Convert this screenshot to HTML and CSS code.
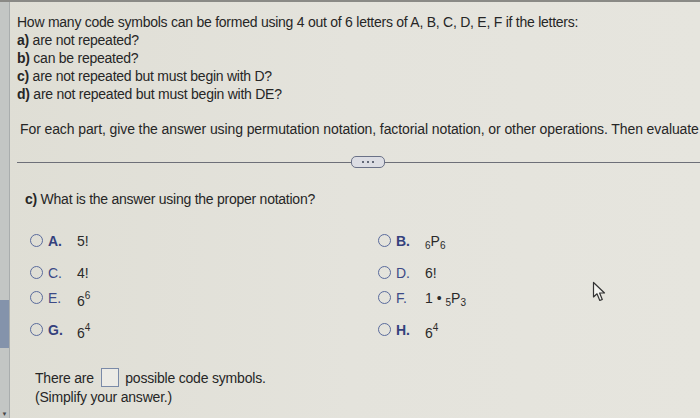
FILE: index.html
```html
<!DOCTYPE html>
<html>
<head>
<meta charset="utf-8">
<link rel="stylesheet" href="styles.css">
</head>
<body>
<div class="screen">
  <div class="scrollbar">
    <div class="track-top"></div>
    <div class="thumb"></div>
    <div class="track-bottom"><span class="arrow">&#9660;</span></div>
  </div>
  <div class="main">
    <div class="question">
      <p class="line">How many code symbols can be formed using 4 out of 6 letters of A, B, C, D, E, F if the letters:</p>
      <p class="line"><b>a)</b> are not repeated?</p>
      <p class="line"><b>b)</b> can be repeated?</p>
      <p class="line"><b>c)</b> are not repeated but must begin with D?</p>
      <p class="line"><b>d)</b> are not repeated but must begin with DE?</p>
      <p class="line instr">For each part, give the answer using permutation notation, factorial notation, or other operations. Then evaluate</p>
    </div>
    <div class="divider">
      <div class="rule"></div>
      <div class="more"><span></span><span></span><span></span></div>
      <div class="rule rule-right"></div>
    </div>
    <div class="part">
      <p class="prompt"><b>c)</b> What is the answer using the proper notation?</p>
      <div class="options">
        <div class="col">
          <div class="opt"><span class="radio"></span><span class="lbl bold">A.</span><span class="val">5!</span></div>
          <div class="opt r2"><span class="radio"></span><span class="lbl">C.</span><span class="val">4!</span></div>
          <div class="opt r3"><span class="radio"></span><span class="lbl">E.</span><span class="val low">6<sup>6</sup></span></div>
          <div class="opt r4"><span class="radio"></span><span class="lbl bold">G.</span><span class="val low">6<sup>4</sup></span></div>
        </div>
        <div class="col col-right">
          <div class="opt"><span class="radio"></span><span class="lbl bold">B.</span><span class="val"><sub>6</sub>P<sub>6</sub></span></div>
          <div class="opt r2"><span class="radio"></span><span class="lbl">D.</span><span class="val">6!</span></div>
          <div class="opt r3"><span class="radio"></span><span class="lbl">F.</span><span class="val">1 &#8226; <sub>5</sub>P<sub>3</sub></span></div>
          <div class="opt r4"><span class="radio"></span><span class="lbl bold">H.</span><span class="val low">6<sup>4</sup></span></div>
        </div>
        <svg class="cursor" width="16" height="22" viewBox="0 0 16 22">
          <path d="M1.5 1.5 L1.5 16 L5 12.8 L7.8 19.5 L10.3 18.4 L7.6 12 L12.5 12 Z" fill="#f4f4f0" stroke="#333" stroke-width="1.2" stroke-linejoin="round"/>
        </svg>
      </div>
      <p class="answer">There are <span class="box"></span> possible code symbols.</p>
      <p class="hint">(Simplify your answer.)</p>
    </div>
  </div>
</div>
</body>
</html>
```

FILE: styles.css
```css
html, body {
  margin: 0;
  padding: 0;
}
body {
  width: 700px;
  height: 418px;
  overflow: hidden;
  background: #e3e2da;
  font-family: "Liberation Sans", Arial, sans-serif;
  color: #262626;
}
.screen {
  display: flex;
  height: 418px;
  background: linear-gradient(90deg, #dfded5 0%, #e4e3dc 50%, #e6e5de 100%);
  border-top: 2px solid #8a8a86;
  box-sizing: border-box;
}
.scrollbar {
  width: 9px;
  flex: none;
  display: flex;
  flex-direction: column;
  background: #c3c6c4;
  border-right: 1px solid #a9adad;
}
.track-top {
  height: 298px;
}
.thumb {
  height: 48px;
  background: #8493ab;
}
.track-bottom {
  flex: 1;
  display: flex;
  align-items: flex-end;
  justify-content: center;
}
.arrow {
  font-size: 6px;
  color: #444;
  line-height: 8px;
}
.main {
  flex: 1;
  min-width: 0;
  overflow: hidden;
}
.question {
  padding: 11px 0 0 7px;
}
.line {
  margin: 0;
  font-size: 14px;
  line-height: 18px;
  white-space: nowrap;
  letter-spacing: -0.25px;
}
.line b, .prompt b {
  font-weight: bold;
}
.instr {
  margin-top: 17px;
  padding-left: 3px;
  letter-spacing: -0.1px;
}
.divider {
  display: flex;
  align-items: center;
  margin: 18px 0 0 7px;
  height: 12px;
}
.rule {
  width: 334px;
  height: 1px;
  background: #6d6f78;
}
.rule-right {
  flex: 1;
  width: auto;
}
.more {
  display: flex;
  gap: 3px;
  align-items: center;
  justify-content: center;
  width: 32px;
  height: 10px;
  border: 1px solid #6a7187;
  border-radius: 5px;
  background: #dcdde3;
  flex: none;
}
.more span {
  width: 2px;
  height: 2px;
  background: #3b4254;
  border-radius: 1px;
}
.part {
  padding-left: 15px;
}
.prompt {
  margin: 22px 0 0;
  font-size: 14px;
  line-height: 18px;
  letter-spacing: -0.25px;
}
.options {
  position: relative;
  display: flex;
  margin-top: 24px;
  padding-left: 5px;
}
.col {
  width: 348px;
  display: flex;
  flex-direction: column;
}
.col-right {
  width: 300px;
}
.opt {
  display: flex;
  align-items: center;
  height: 17px;
  font-size: 14px;
}
.opt.r2 {
  margin-top: 15px;
}
.opt.r3 {
  margin-top: 8px;
}
.opt.r4 {
  margin-top: 15px;
}
.radio {
  width: 11px;
  height: 11px;
  border: 1.5px solid #5a6b9c;
  border-radius: 50%;
  margin-right: 5px;
  flex: none;
}
.lbl {
  width: 29px;
  color: #3c4a86;
  font-size: 14px;
}
.lbl.bold {
  font-weight: bold;
  color: #34417d;
}
.val {
  color: #2a2a2a;
  white-space: pre;
}
.val.low {
  margin-top: 6px;
}
.val sup {
  font-size: 10px;
  vertical-align: 7px;
  line-height: 0;
}
.val sub {
  font-size: 10px;
  vertical-align: -3px;
  line-height: 0;
}
.cursor {
  position: absolute;
  left: 567px;
  top: 49px;
}
.answer {
  margin: 30px 0 0 10px;
  font-size: 14px;
  line-height: 18px;
  letter-spacing: -0.2px;
  display: flex;
  align-items: center;
  white-space: pre;
}
.box {
  display: inline-block;
  width: 16px;
  height: 17px;
  border: 1px solid #7a8aa8;
  background: #ecebe6;
  margin: 0 3px;
}
.hint {
  margin: 1px 0 0 10px;
  font-size: 14px;
  line-height: 18px;
  letter-spacing: -0.2px;
}
```
